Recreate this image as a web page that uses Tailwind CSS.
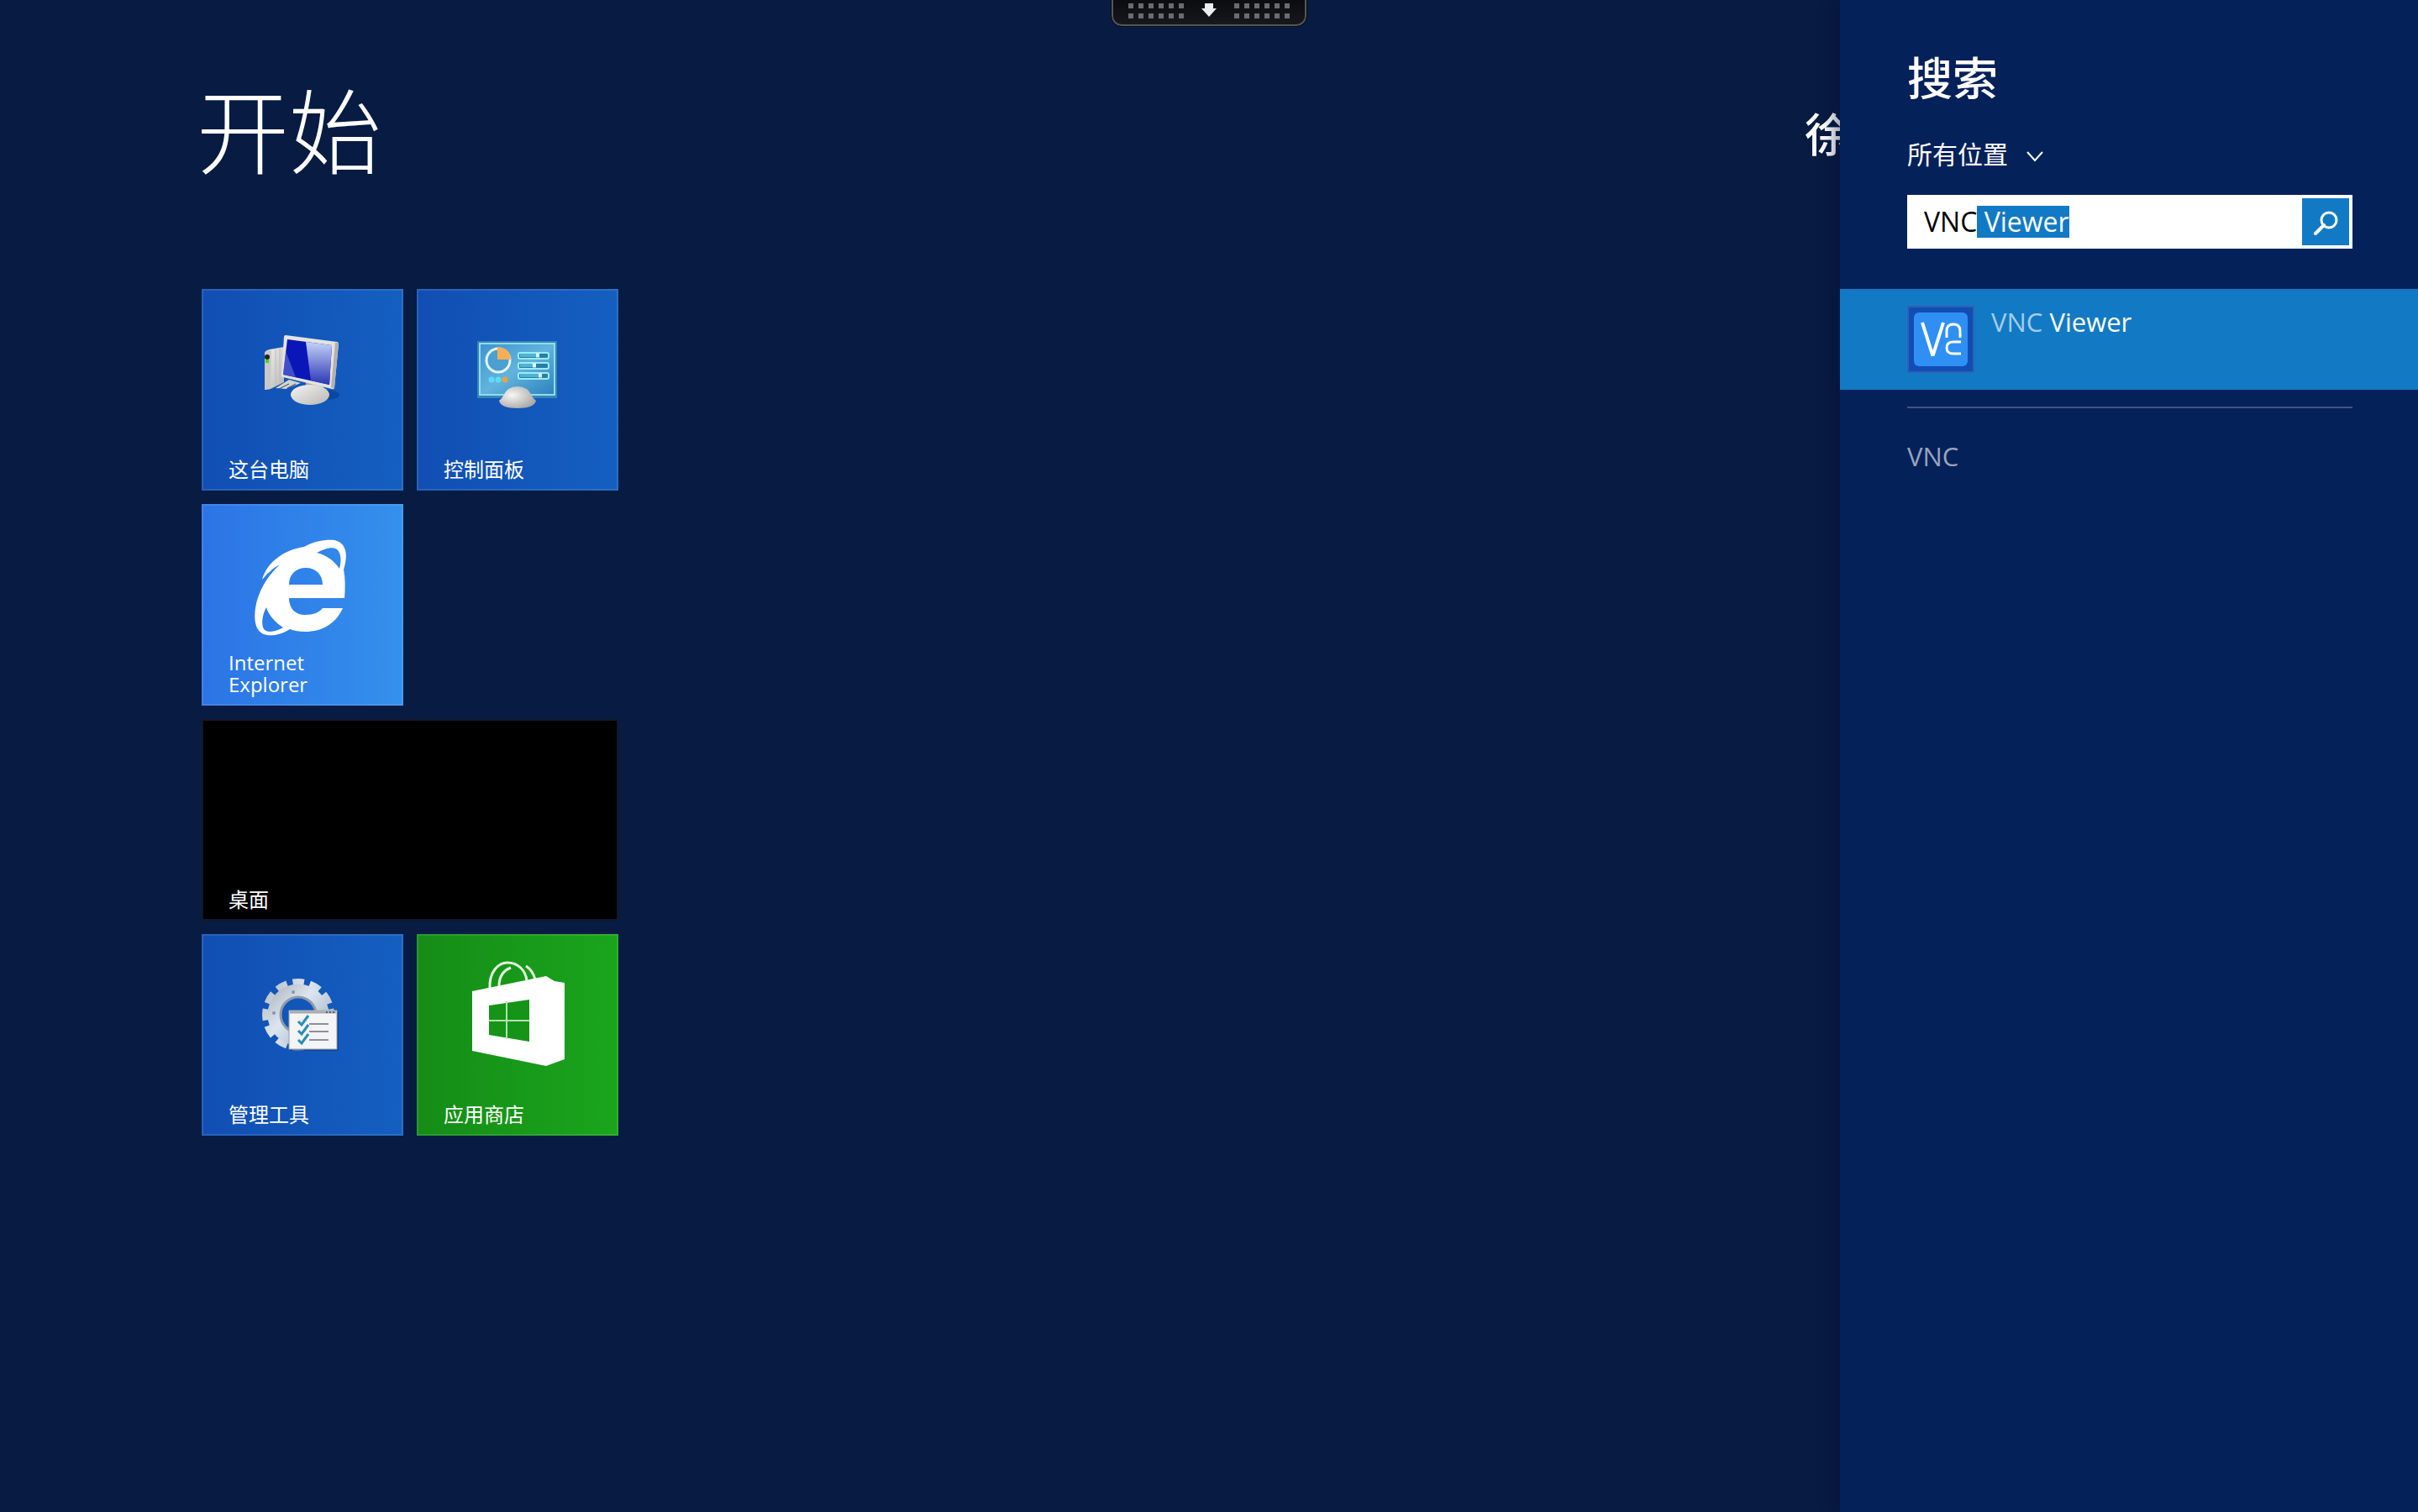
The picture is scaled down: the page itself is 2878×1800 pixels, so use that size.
<!DOCTYPE html>
<html lang="zh-CN">
  <head>
    <meta charset="UTF-8" />
    <meta name="viewport" content="width=device-width, initial-scale=1.0" />
    <title>开始</title>

    <!-- Tailwind CSS -->
    <script src="https://cdn.jsdelivr.net/npm/@tailwindcss/browser@4"></script>
  </head>

  <body class="relative flex min-h-screen overflow-x-hidden bg-[#081b42] font-['Open_Sans','Noto_Sans_CJK_SC',sans-serif] text-white">
    <!-- Connection bar -->
    <button
      type="button"
      aria-label="连接栏"
      class="absolute top-0 left-1/2 z-10 flex h-[31px] w-[232px] -translate-x-1/2 justify-center rounded-b-xl border-2 border-t-0 border-[#55565a] bg-linear-to-b from-[#0b0c10] to-[#17181c] outline-1 outline-[#0b0c10]"
    >
      <svg class="h-7 w-[198px] shrink-0" viewBox="0 0 198 28" aria-hidden="true">
        <g stroke="#6b6b70" stroke-width="6" stroke-dasharray="6 6" fill="none">
          <path d="M3 7h66M3 19h66M129 7h66M129 19h66" />
        </g>
        <path d="M94 4h10v6h4l-9 10-9-10h4z" fill="#ececf0" />
      </svg>
    </button>

    <!-- Start screen -->
    <main class="min-w-0 flex-1 overflow-hidden">
      <header class="flex h-[344px] items-start justify-between pt-[76px] pl-[234px]">
        <h1 class="text-[110px] leading-[160px] font-light">开始</h1>
        <p class="-mr-3 text-[54px] leading-[168px] font-medium">徐</p>
      </header>

      <nav class="grid w-fit grid-cols-[240px_240px] gap-4 pb-16 pl-60 text-2xl leading-[26px]">
        <a href="#" class="flex h-60 flex-col justify-between bg-linear-to-r from-[#114eb3] to-[#145fc0] pb-3 inset-ring-2 inset-ring-white/10">
          <svg class="h-44 w-full" viewBox="0 0 240 176" aria-hidden="true">
            <defs>
              <linearGradient id="screen" x1="0" y1="0" x2="0" y2="1">
                <stop offset="0" stop-color="#c3d3f7" />
                <stop offset="1" stop-color="#2a35b4" />
              </linearGradient>
              <linearGradient id="metal" x1="0" y1="0" x2="1" y2="1">
                <stop offset="0" stop-color="#f4f4f2" />
                <stop offset="1" stop-color="#b9b7b4" />
              </linearGradient>
            </defs>
            <ellipse cx="148" cy="126" rx="16" ry="6" fill="#0b3a8c" opacity="0.6" />
            <path d="M75 76q1-3 6-4l17-3v42l-16 8-7 1z" fill="url(#metal)" />
            <path d="M75 76q1-3 8-3l-1 46-7 1z" fill="#c9c8c6" />
            <path d="M88 72v42M93 71v40" stroke="#bdbcba" />
            <circle cx="78" cy="81" r="3" fill="#222" />
            <path d="M76 84h4v4h-4z" fill="#3fd61e" />
            <path d="M88 118l16-10 14 4-18 7z" fill="#d4d4d4" />
            <path d="M92 119l12-6M102 118l10-5" stroke="#3c4454" stroke-width="1" />
            <path d="M124 110h20l2 12h-22z" fill="#aaa8a6" />
            <ellipse cx="129" cy="126" rx="23" ry="12" fill="url(#metal)" />
            <path d="M98 57q0-2 2-2l61 8q2 0 2 3l-5 51q0 3-3 2l-58-14q-3-1-2-3z" fill="#e4e3df" />
            <path d="M159 64l4 0-5 55-4-2z" fill="#b4b1ac" />
            <path d="M102 60l53 7-3 47-55-12z" fill="#0a16b8" />
            <path d="M124 63l31 4-3 47-22-5z" fill="url(#screen)" />
            <path d="M100 74l12 31-15-3z" fill="#5a66d0" opacity="0.7" />
          </svg>
          <span class="pl-8">这台电脑</span>
        </a>

        <a href="#" class="flex h-60 flex-col justify-between bg-linear-to-r from-[#114eb3] to-[#145fc0] pb-3 inset-ring-2 inset-ring-white/10">
          <svg class="h-44 w-full" viewBox="0 0 240 176" aria-hidden="true">
            <defs>
              <linearGradient id="panel" x1="0" y1="0" x2="1" y2="1">
                <stop offset="0" stop-color="#3f93cf" />
                <stop offset="0.5" stop-color="#62b4dc" />
                <stop offset="1" stop-color="#2b82bd" />
              </linearGradient>
              <radialGradient id="dome" cx="0.35" cy="0.4" r="0.8">
                <stop offset="0" stop-color="#f6f6f4" />
                <stop offset="1" stop-color="#9d9b9a" />
              </radialGradient>
            </defs>
            <rect x="72" y="62" width="95" height="68" fill="#3a84b4" />
            <rect x="75" y="65" width="89" height="61" fill="url(#panel)" stroke="#8fdcf0" stroke-width="2" />
            <circle cx="97" cy="85" r="14" fill="#4ba0d0" stroke="#e2f6fc" stroke-width="3" />
            <path d="M96 84V69q15 1 16 15z" fill="#f6ae54" />
            <g fill="#2a7fa8" stroke="#9ceaf8" stroke-width="2">
              <rect x="121" y="76" width="36" height="7" rx="2" />
              <rect x="121" y="88" width="36" height="7" rx="2" />
              <rect x="121" y="100" width="36" height="7" rx="2" />
            </g>
            <path d="M123 79h19M123 91h15M123 103h22" stroke="#4fb4d4" stroke-width="4" />
            <path d="M142 79h4M138 91h4M145 103h4" stroke="#d8f8fc" stroke-width="5" />
            <g fill="none" stroke-width="3">
              <circle cx="89" cy="108" r="2" stroke="#5cdcff" />
              <circle cx="97" cy="108" r="2" stroke="#5cdcff" />
              <circle cx="105" cy="108" r="2" stroke="#f0a040" />
            </g>
            <path d="M98 133q4-3 5-6 5-11 17-11t17 11q1 3 5 6-2 9-22 9t-22-9z" fill="url(#dome)" />
          </svg>
          <span class="pl-8">控制面板</span>
        </a>

        <a href="#" class="col-start-1 flex h-60 flex-col justify-between bg-linear-to-r from-[#2c74e6] to-[#3590ec] pb-3 inset-ring-2 inset-ring-white/10">
          <svg class="h-44 w-full" viewBox="0 0 240 176" aria-hidden="true">
            <path
              fill="#fff"
              fill-rule="evenodd"
              d="M72 90C78 68 100 54 122 51C136 43 150 42 158 43C172 46 175 60 169 78C171 88 171 100 170 112H104C104 125 112 132 123 132C133 132 140 129 144 124H168C160 142 144 152 123 152C116 152 110 151 105 149C94 156 82 158 74 155C64 151 62 138 64 124C67 104 78 86 93 72C85 76 78 83 72 90Z
                 M104 96C104 84 112 76 124 76C136 76 144 84 144 96Z
                 M137 58C146 53 156 50 161 54C167 59 166 70 164 77C158 68 149 61 137 58Z
                 M77 123C71 134 71 146 75 150C80 154 90 151 97 147C88 141 80 133 77 123Z"
            />
          </svg>
          <span class="w-40 pl-8">Internet Explorer</span>
        </a>

        <a href="#" class="col-span-2 flex h-60 flex-col justify-end bg-black pb-3 inset-ring-2 inset-ring-[#10182c]">
          <span class="pl-8">桌面</span>
        </a>

        <a href="#" class="flex h-60 flex-col justify-between bg-linear-to-r from-[#114eb3] to-[#145fc0] pb-3 inset-ring-2 inset-ring-white/10">
          <svg class="h-44 w-full" viewBox="0 0 240 176" aria-hidden="true">
            <defs>
              <linearGradient id="gear" x1="0" y1="0" x2="1" y2="1">
                <stop offset="0" stop-color="#b4bcc4" />
                <stop offset="0.4" stop-color="#dde6f0" />
                <stop offset="1" stop-color="#9fb2c4" />
              </linearGradient>
            </defs>
            <g fill="none">
              <circle cx="115" cy="96" r="38" stroke="url(#gear)" stroke-width="10" stroke-dasharray="13 6.9" transform="rotate(-10 115 96)" />
              <circle cx="115" cy="96" r="29" stroke="url(#gear)" stroke-width="15" />
              <circle cx="115" cy="96" r="21" stroke="#8b9aac" stroke-width="3" />
            </g>
            <circle cx="109" cy="69" r="2" fill="#7f97b4" />
            <circle cx="86" cy="94" r="2" fill="#7f97b4" />
            <rect x="105" y="92" width="58" height="47" fill="#0d3580" opacity="0.6" />
            <rect x="104" y="91" width="57" height="46" fill="#f3f4f6" stroke="#9aa0a8" />
            <path d="M105 93h55" stroke="#a9a9ae" stroke-width="3" />
            <path d="M148 93h2M152 93h2M156 93h2" stroke="#5b5f68" stroke-width="2" />
            <path d="M128 107h23M128 116h23M128 126h23" stroke="#8e9096" stroke-width="2" />
            <path d="M115 104l4 4 8-11M115 115l4 4 8-11M115 126l4 4 8-11" fill="none" stroke="#2a8db4" stroke-width="3" />
          </svg>
          <span class="pl-8">管理工具</span>
        </a>

        <a href="#" class="flex h-60 flex-col justify-between bg-linear-to-r from-[#158c17] to-[#1aa51c] pb-3 inset-ring-2 inset-ring-white/10">
          <svg class="h-44 w-full" viewBox="0 0 240 176" aria-hidden="true">
            <path d="M66 68l88-18 10 6 12 2v91l-22 8-88-18z" fill="#fff" />
            <g fill="none" stroke="#e4fbe0" stroke-width="3">
              <path d="M87 65C86 45 97 34 108 34S130 42 131 56" />
              <path d="M98 62C98 50 104 43 112 40M130 38Q138 43 141 54" />
            </g>
            <path d="M86 85l48-7v50l-48-8z" fill="#169418" />
            <path d="M107 80v45M86 103h48" stroke="#b4e4b0" stroke-width="2" />
          </svg>
          <span class="pl-8">应用商店</span>
        </a>
      </nav>
    </main>

    <!-- Search panel -->
    <aside class="w-[688px] shrink-0 bg-[#05215a] text-[31px] leading-[38px] shadow-[-8px_0_16px_rgba(4,16,56,0.4)]">
      <form class="flex h-[344px] flex-col items-start pt-[58px] pr-[78px] pl-20">
        <h2 class="text-[54px] leading-[70px] font-medium">搜索</h2>
        <div class="mt-9 flex h-10 items-center">
          <select aria-label="搜索范围" class="w-[142px] cursor-pointer appearance-none bg-transparent text-[30px] leading-10">
            <option>所有位置</option>
          </select>
          <svg class="mt-1 h-4 w-5" viewBox="0 0 20 16" fill="none" stroke="#fff" stroke-width="2" aria-hidden="true">
            <path d="M1 3l9 10 9-10" />
          </svg>
        </div>
        <div class="mt-7 flex h-16 w-full bg-white p-1">
          <input
            id="query"
            type="text"
            value="VNC Viewer"
            aria-label="搜索"
            autofocus
            class="min-w-0 flex-1 bg-white px-4 text-[32px] text-black outline-none selection:bg-[#127ac4] selection:text-white"
          />
          <button type="submit" aria-label="搜索" class="flex w-14 items-center justify-center bg-[#127ac4]">
            <svg class="size-14" viewBox="0 0 56 56" fill="none" stroke="#fff" aria-hidden="true">
              <circle cx="32" cy="26" r="9" stroke-width="3" />
              <path d="M26 32L16 42" stroke-width="4" stroke-linecap="round" />
            </svg>
          </button>
        </div>
      </form>

      <a href="#" class="flex h-[120px] items-start gap-5 bg-[#127ac4] px-20 pt-5">
        <svg class="size-20" viewBox="0 0 80 80" fill="none" aria-hidden="true">
          <rect x="1" y="1" width="78" height="78" fill="#114eb3" stroke="#315fb2" stroke-width="2" />
          <rect x="8" y="8" width="64" height="64" rx="6" fill="#308ff3" />
          <g stroke="#fff">
            <path d="M18 20L30 58h1L43 20" stroke-width="4" />
            <path d="M47 38V30Q47 22 55 22T63 30V38M64 43H55Q47 43 47 50T55 57H64" stroke-width="3" />
          </g>
        </svg>
        <span><span class="text-[#a3cdea]">VNC</span> Viewer</span>
      </a>

      <div class="mr-[78px] ml-20 border-b-2 border-[#45547f] pt-5"></div>
      <a href="#" class="mt-[38px] ml-20 block text-[#98a3bf]">VNC</a>
    </aside>

    <script>
      // Keep the typed part and select the autocompleted rest
      const query = document.getElementById("query");
      query.focus();
      query.setSelectionRange(3, query.value.length);
    </script>
  </body>
</html>
